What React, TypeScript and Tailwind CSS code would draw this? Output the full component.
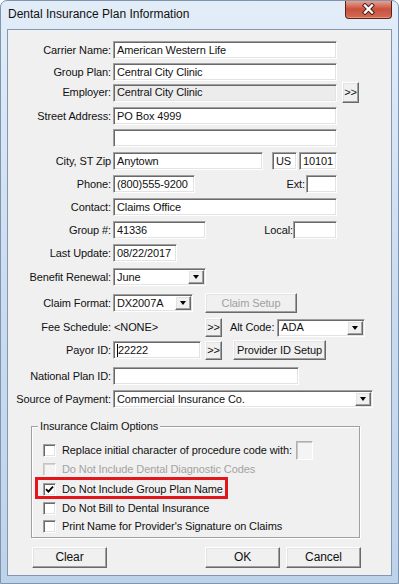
import React from "react";

const sunkenBorder =
  "border border-t-[#a0a0a0] border-l-[#a0a0a0] border-b-white border-r-white shadow-[inset_1px_1px_0_#696969,inset_-1px_-1px_0_#e3e3e3]";
const raised =
  "bg-[#f0f0f0] border border-t-white border-l-white border-b-[#696969] border-r-[#696969] shadow-[inset_-1px_-1px_0_#a0a0a0,inset_1px_1px_0_#e3e3e3]";

function Label({ children }: { children?: React.ReactNode }) {
  return <div className="w-[105px] shrink-0 text-right pr-[2px] whitespace-nowrap">{children}</div>;
}

function Edit({
  className = "",
  disabled = false,
  children,
}: {
  className?: string;
  disabled?: boolean;
  children?: React.ReactNode;
}) {
  return (
    <div
      className={
        "flex items-center h-[18px] pl-[3px] shrink-0 overflow-hidden whitespace-nowrap " +
        sunkenBorder +
        " " +
        (disabled ? "bg-[#ececec] " : "bg-white ") +
        className
      }
    >
      {children}
    </div>
  );
}

function Arrow() {
  return (
    <div className={"ml-auto w-[16px] h-[14px] flex items-center justify-center shrink-0 " + raised}>
      <div className="w-0 h-0 border-l-[3.5px] border-r-[3.5px] border-t-[4px] border-l-transparent border-r-transparent border-t-black" />
    </div>
  );
}

function Select({ className = "", children }: { className?: string; children?: React.ReactNode }) {
  return (
    <div
      className={
        "flex items-center h-[18px] pl-[3px] pr-[1px] shrink-0 overflow-hidden whitespace-nowrap bg-white " +
        sunkenBorder +
        " " +
        className
      }
    >
      <span>{children}</span>
      <Arrow />
    </div>
  );
}

function Btn({ className = "", children }: { className?: string; children?: React.ReactNode }) {
  return (
    <div className={"flex items-center justify-center shrink-0 whitespace-nowrap " + raised + " " + className}>
      {children}
    </div>
  );
}

function Check({ checked = false, disabled = false }: { checked?: boolean; disabled?: boolean }) {
  return (
    <div
      className={
        "w-[13px] h-[13px] shrink-0 flex items-center justify-center border " +
        (disabled
          ? "bg-[#f4f4f4] border-t-[#c4c4c4] border-l-[#c4c4c4] border-b-white border-r-white shadow-[inset_1px_1px_0_#d4d4d4]"
          : "bg-white border-t-[#a0a0a0] border-l-[#a0a0a0] border-b-white border-r-white shadow-[inset_1px_1px_0_#696969,inset_-1px_-1px_0_#e3e3e3]")
      }
    >
      {checked && (
        <svg width="9" height="9" viewBox="0 0 9 9">
          <path d="M1 4.2 L3.4 6.6 L8 1.6" stroke="black" strokeWidth="1.8" fill="none" />
        </svg>
      )}
    </div>
  );
}

export default function App() {
  return (
    <div className="w-[399px] h-[584px] flex flex-col bg-linear-to-b from-[#e2edf8] via-[#cbdcef] to-[#bed3ea] border border-[#7d95b1] rounded-t-[7px] overflow-hidden font-['Liberation_Sans',Arial,sans-serif] text-black">
      {/* Title bar */}
      <div className="h-[28px] flex items-start shrink-0">
        <div className="pl-[7px] pt-[6px] text-[12px] leading-[15px] text-[#111]">
          Dental Insurance Plan Information
        </div>
        <div className="ml-auto mr-[6px] -mt-[1px] w-[47px] h-[19px] rounded-b-[4px] border border-t-0 border-[#5b2119] bg-linear-to-b from-[#e9aa9c] via-[#c9513e] to-[#d36a55] flex items-center justify-center shadow-[inset_0_-1px_0_#e8957f]">
          <svg width="15" height="12" viewBox="0 0 15 12">
            <path d="M4 2.5 L11 9.5 M11 2.5 L4 9.5" stroke="#4a1d17" strokeWidth="4.2" strokeLinecap="square" />
            <path d="M4 2.5 L11 9.5 M11 2.5 L4 9.5" stroke="white" strokeWidth="2.3" strokeLinecap="square" />
          </svg>
        </div>
      </div>

      {/* Client area */}
      <div className="mx-[6px] h-[547px] shrink-0 bg-[#f0f0f0] border border-[#8398b0] flex flex-col text-[11px] leading-[13px] tracking-[-0.1px] text-[#111]">
        <div className="flex items-center h-[18px] mt-[11px]">
          <Label>Carrier Name:</Label>
          <Edit className="w-[224px]">American Western Life</Edit>
        </div>
        <div className="flex items-center h-[18px] mt-[4px]">
          <Label>Group Plan:</Label>
          <Edit className="w-[224px]">Central City Clinic</Edit>
        </div>
        <div className="flex items-center h-[21px] mt-[1px]">
          <Label>Employer:</Label>
          <Edit className="w-[224px]" disabled>
            Central City Clinic
          </Edit>
          <Btn className="ml-[5px] w-[17px] h-[21px]">&gt;&gt;</Btn>
        </div>
        <div className="flex items-center h-[18px] mt-[4px]">
          <Label>Street Address:</Label>
          <Edit className="w-[224px]">PO Box 4999</Edit>
        </div>
        <div className="flex items-center h-[18px] mt-[4px]">
          <Label></Label>
          <Edit className="w-[224px]" />
        </div>
        <div className="flex items-center h-[18px] mt-[5px]">
          <Label>City, ST Zip</Label>
          <Edit className="w-[150px]">Anytown</Edit>
          <Edit className="ml-[9px] w-[25px]">US</Edit>
          <Edit className="ml-[2px] w-[38px]">10101</Edit>
        </div>
        <div className="flex items-center h-[18px] mt-[5px] w-[329px]">
          <Label>Phone:</Label>
          <Edit className="w-[82px]">(800)555-9200</Edit>
          <span className="ml-auto pr-[1px]">Ext:</span>
          <Edit className="w-[31px]" />
        </div>
        <div className="flex items-center h-[18px] mt-[5px]">
          <Label>Contact:</Label>
          <Edit className="w-[224px]">Claims Office</Edit>
        </div>
        <div className="flex items-center h-[18px] mt-[5px] w-[329px]">
          <Label>Group #:</Label>
          <Edit className="w-[93px]">41336</Edit>
          <span className="ml-auto">Local:</span>
          <Edit className="w-[44px]" />
        </div>
        <div className="flex items-center h-[18px] mt-[5px]">
          <Label>Last Update:</Label>
          <Edit className="w-[64px]">08/22/2017</Edit>
        </div>
        <div className="flex items-center h-[18px] mt-[6px]">
          <Label>Benefit Renewal:</Label>
          <Select className="w-[93px]">June</Select>
        </div>
        <div className="flex items-center h-[20px] mt-[7px]">
          <Label>Claim Format:</Label>
          <Select className="w-[80px]">DX2007A</Select>
          <Btn className="ml-[12px] w-[92px] h-[20px] text-[#a0a0a0]">Claim Setup</Btn>
        </div>
        <div className="flex items-center h-[19px] mt-[5px]">
          <Label>Fee Schedule:</Label>
          <div className="w-[92px] shrink-0 pl-[1px]">&lt;NONE&gt;</div>
          <Btn className="w-[17px] h-[19px]">&gt;&gt;</Btn>
          <span className="ml-[8px] whitespace-nowrap">Alt Code:</span>
          <Select className="ml-[3px] w-[88px]">ADA</Select>
        </div>
        <div className="flex items-center h-[20px] mt-[3px]">
          <Label>Payor ID:</Label>
          <Edit className="w-[88px]">
            <span className="w-[1px] h-[13px] bg-black shrink-0" />
            22222
          </Edit>
          <Btn className="ml-[4px] w-[17px] h-[19px]">&gt;&gt;</Btn>
          <Btn className="ml-[11px] w-[93px] h-[20px]">Provider ID Setup</Btn>
        </div>
        <div className="flex items-center h-[18px] mt-[7px]">
          <Label>National Plan ID:</Label>
          <Edit className="w-[186px]" />
        </div>
        <div className="flex items-center h-[18px] mt-[5px]">
          <Label>Source of Payment:</Label>
          <Select className="w-[260px]">Commercial Insurance Co.</Select>
        </div>

        {/* Group box */}
        <div className="relative mt-[18px] ml-[23px] w-[329px] h-[112px] shrink-0 border border-[#a0a0a0] shadow-[inset_1px_1px_0_white,1px_1px_0_white]">
          <div className="absolute -top-[7px] left-[6px] px-[2px] bg-[#f0f0f0] leading-[13px] whitespace-nowrap">
            Insurance Claim Options
          </div>
          <div className="flex flex-col pt-[14px] pl-[11px]">
            <div className="flex items-center h-[19px]">
              <Check />
              <span className="ml-[6px] whitespace-nowrap">Replace initial character of procedure code with:</span>
              <div className="ml-[4px] w-[17px] h-[19px] shrink-0 bg-[#f4f4f4] border border-t-[#b0b0b0] border-l-[#b0b0b0] border-b-white border-r-white shadow-[inset_1px_1px_0_#c8c8c8]" />
            </div>
            <div className="flex items-center h-[18px]">
              <Check disabled />
              <span className="ml-[6px] whitespace-nowrap text-[#a3a3a3]">Do Not Include Dental Diagnostic Codes</span>
            </div>
            <div className="relative flex items-center h-[18px] mt-[2px]">
              <Check checked />
              <span className="ml-[6px] whitespace-nowrap">Do Not Include Group Plan Name</span>
              <div className="absolute -left-[8px] -top-[3px] w-[193px] h-[22px] border-[3px] border-[#e3161b]" />
            </div>
            <div className="flex items-center h-[18px] mt-[1px]">
              <Check />
              <span className="ml-[6px] whitespace-nowrap">Do Not Bill to Dental Insurance</span>
            </div>
            <div className="flex items-center h-[18px]">
              <Check />
              <span className="ml-[6px] whitespace-nowrap">Print Name for Provider's Signature on Claims</span>
            </div>
          </div>
        </div>

        {/* Buttons */}
        <div className="flex items-center mt-[9px] text-[12px]">
          <Btn className="ml-[24px] w-[75px] h-[21px]">Clear</Btn>
          <Btn className="ml-[98px] w-[75px] h-[21px]">OK</Btn>
          <Btn className="ml-[6px] w-[75px] h-[21px]">Cancel</Btn>
        </div>
      </div>
    </div>
  );
}
